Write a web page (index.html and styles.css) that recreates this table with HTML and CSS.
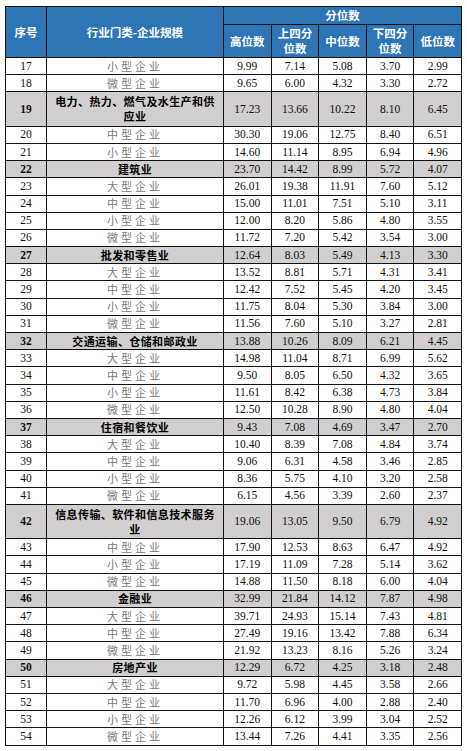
FILE: index.html
```html
<!DOCTYPE html>
<html lang="zh">
<head>
<meta charset="utf-8">
<link rel="stylesheet" href="styles.css">
</head>
<body>
<table class="tbl">
<colgroup>
<col class="c-no"><col class="c-name"><col class="c-v"><col class="c-v"><col class="c-v"><col class="c-v"><col class="c-v">
</colgroup>
<thead>
<tr class="h1"><th rowspan="2">序号</th><th rowspan="2">行业门类-企业规模</th><th colspan="5">分位数</th></tr>
<tr class="h2"><th>高位数</th><th>上四分<br>位数</th><th>中位数</th><th>下四分<br>位数</th><th>低位数</th></tr>
</thead>
<tbody>
<tr><td class="no">17</td><td class="sub">小型企业</td><td>9.99</td><td>7.14</td><td>5.08</td><td>3.70</td><td>2.99</td></tr>
<tr><td class="no">18</td><td class="sub">微型企业</td><td>9.65</td><td>6.00</td><td>4.32</td><td>3.30</td><td>2.72</td></tr>
<tr class="g dbl"><td class="no">19</td><td class="gn">电力、热力、燃气及水生产和供应业</td><td>17.23</td><td>13.66</td><td>10.22</td><td>8.10</td><td>6.45</td></tr>
<tr><td class="no">20</td><td class="sub">中型企业</td><td>30.30</td><td>19.06</td><td>12.75</td><td>8.40</td><td>6.51</td></tr>
<tr><td class="no">21</td><td class="sub">小型企业</td><td>14.60</td><td>11.14</td><td>8.95</td><td>6.94</td><td>4.96</td></tr>
<tr class="g"><td class="no">22</td><td class="gn">建筑业</td><td>23.70</td><td>14.42</td><td>8.99</td><td>5.72</td><td>4.07</td></tr>
<tr><td class="no">23</td><td class="sub">大型企业</td><td>26.01</td><td>19.38</td><td>11.91</td><td>7.60</td><td>5.12</td></tr>
<tr><td class="no">24</td><td class="sub">中型企业</td><td>15.00</td><td>11.01</td><td>7.51</td><td>5.10</td><td>3.11</td></tr>
<tr><td class="no">25</td><td class="sub">小型企业</td><td>12.00</td><td>8.20</td><td>5.86</td><td>4.80</td><td>3.55</td></tr>
<tr><td class="no">26</td><td class="sub">微型企业</td><td>11.72</td><td>7.20</td><td>5.42</td><td>3.54</td><td>3.00</td></tr>
<tr class="g"><td class="no">27</td><td class="gn">批发和零售业</td><td>12.64</td><td>8.03</td><td>5.49</td><td>4.13</td><td>3.30</td></tr>
<tr><td class="no">28</td><td class="sub">大型企业</td><td>13.52</td><td>8.81</td><td>5.71</td><td>4.31</td><td>3.41</td></tr>
<tr><td class="no">29</td><td class="sub">中型企业</td><td>12.42</td><td>7.52</td><td>5.45</td><td>4.20</td><td>3.45</td></tr>
<tr><td class="no">30</td><td class="sub">小型企业</td><td>11.75</td><td>8.04</td><td>5.30</td><td>3.84</td><td>3.00</td></tr>
<tr><td class="no">31</td><td class="sub">微型企业</td><td>11.56</td><td>7.60</td><td>5.10</td><td>3.27</td><td>2.81</td></tr>
<tr class="g"><td class="no">32</td><td class="gn">交通运输、仓储和邮政业</td><td>13.88</td><td>10.26</td><td>8.09</td><td>6.21</td><td>4.45</td></tr>
<tr><td class="no">33</td><td class="sub">大型企业</td><td>14.98</td><td>11.04</td><td>8.71</td><td>6.99</td><td>5.62</td></tr>
<tr><td class="no">34</td><td class="sub">中型企业</td><td>9.50</td><td>8.05</td><td>6.50</td><td>4.32</td><td>3.65</td></tr>
<tr><td class="no">35</td><td class="sub">小型企业</td><td>11.61</td><td>8.42</td><td>6.38</td><td>4.73</td><td>3.84</td></tr>
<tr><td class="no">36</td><td class="sub">微型企业</td><td>12.50</td><td>10.28</td><td>8.90</td><td>4.80</td><td>4.04</td></tr>
<tr class="g"><td class="no">37</td><td class="gn">住宿和餐饮业</td><td>9.43</td><td>7.08</td><td>4.69</td><td>3.47</td><td>2.70</td></tr>
<tr><td class="no">38</td><td class="sub">大型企业</td><td>10.40</td><td>8.39</td><td>7.08</td><td>4.84</td><td>3.74</td></tr>
<tr><td class="no">39</td><td class="sub">中型企业</td><td>9.06</td><td>6.31</td><td>4.58</td><td>3.46</td><td>2.85</td></tr>
<tr><td class="no">40</td><td class="sub">小型企业</td><td>8.36</td><td>5.75</td><td>4.10</td><td>3.20</td><td>2.58</td></tr>
<tr><td class="no">41</td><td class="sub">微型企业</td><td>6.15</td><td>4.56</td><td>3.39</td><td>2.60</td><td>2.37</td></tr>
<tr class="g dbl"><td class="no">42</td><td class="gn">信息传输、软件和信息技术服务业</td><td>19.06</td><td>13.05</td><td>9.50</td><td>6.79</td><td>4.92</td></tr>
<tr><td class="no">43</td><td class="sub">中型企业</td><td>17.90</td><td>12.53</td><td>8.63</td><td>6.47</td><td>4.92</td></tr>
<tr><td class="no">44</td><td class="sub">小型企业</td><td>17.19</td><td>11.09</td><td>7.28</td><td>5.14</td><td>3.62</td></tr>
<tr><td class="no">45</td><td class="sub">微型企业</td><td>14.88</td><td>11.50</td><td>8.18</td><td>6.00</td><td>4.04</td></tr>
<tr class="g"><td class="no">46</td><td class="gn">金融业</td><td>32.99</td><td>21.84</td><td>14.12</td><td>7.87</td><td>4.98</td></tr>
<tr><td class="no">47</td><td class="sub">大型企业</td><td>39.71</td><td>24.93</td><td>15.14</td><td>7.43</td><td>4.81</td></tr>
<tr><td class="no">48</td><td class="sub">中型企业</td><td>27.49</td><td>19.16</td><td>13.42</td><td>7.88</td><td>6.34</td></tr>
<tr><td class="no">49</td><td class="sub">微型企业</td><td>21.92</td><td>13.23</td><td>8.16</td><td>5.26</td><td>3.24</td></tr>
<tr class="g"><td class="no">50</td><td class="gn">房地产业</td><td>12.29</td><td>6.72</td><td>4.25</td><td>3.18</td><td>2.48</td></tr>
<tr><td class="no">51</td><td class="sub">大型企业</td><td>9.72</td><td>5.98</td><td>4.45</td><td>3.58</td><td>2.66</td></tr>
<tr><td class="no">52</td><td class="sub">中型企业</td><td>11.70</td><td>6.96</td><td>4.00</td><td>2.88</td><td>2.40</td></tr>
<tr><td class="no">53</td><td class="sub">小型企业</td><td>12.26</td><td>6.12</td><td>3.99</td><td>3.04</td><td>2.52</td></tr>
<tr><td class="no">54</td><td class="sub">微型企业</td><td>13.44</td><td>7.26</td><td>4.41</td><td>3.35</td><td>2.56</td></tr>
</tbody>
</table>
</body>
</html>
```
FILE: styles.css
```css
html, body {
  margin: 0;
  padding: 0;
  background: #ffffff;
}
body {
  padding: 6px 0 0 5px;
}
.tbl {
  border-collapse: collapse;
  table-layout: fixed;
  width: 456px;
  font-family: "Liberation Serif", "Noto Serif CJK SC", "Noto Sans CJK SC", serif;
  font-size: 11.5px;
  color: #111;
}
.c-no { width: 41px; }
.c-name { width: 177px; }
.c-v { width: 47.6px; }
.tbl th, .tbl td {
  border: 1px solid #111;
  padding: 0;
  text-align: center;
  vertical-align: middle;
  line-height: 15px;
}
.tbl th {
  background: #2e75b6;
  color: #fff;
  font-family: "Noto Sans CJK SC", sans-serif;
  font-weight: 700;
  font-size: 11.5px;
  line-height: 15px;
}
.h1 th { height: 17px; }
.h2 th { height: 32px; }
.tbl tbody tr { height: 17.2px; }
.tbl tbody tr.dbl { height: 34.4px; }
.tbl td.no {
  font-size: 11.5px;
}
.tbl td.sub {
  font-family: "Noto Sans CJK SC", sans-serif;
  color: #7a7a7a;
  font-size: 11px;
  letter-spacing: 3px;
  font-weight: 400;
}
.g td {
  background: #d0cece;
}
.g td.no {
  font-weight: 700;
}
.g td.gn {
  font-family: "Noto Sans CJK SC", sans-serif;
  font-weight: 700;
  font-size: 11px;
  color: #000;
  letter-spacing: 0.4px;
  padding: 0 8px;
}
```
